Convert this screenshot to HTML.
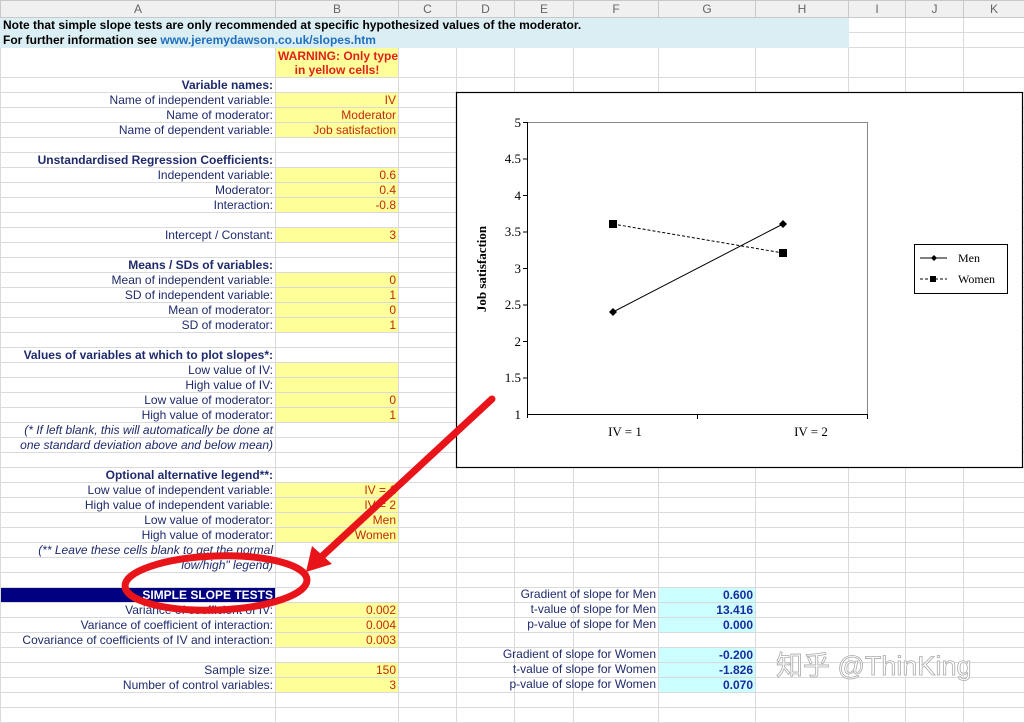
<!DOCTYPE html>
<html><head><meta charset="utf-8"><style>
*{margin:0;padding:0;box-sizing:border-box}
body{width:1024px;height:713px;overflow:hidden;background:#fff;font-family:"Liberation Sans",Arial,sans-serif;font-size:12px;position:relative}
table{border-collapse:collapse;table-layout:fixed;position:absolute;left:0;top:0;width:1024px}
td{border:1px solid #dadada;height:15px;line-height:13px;white-space:nowrap;overflow:visible;padding:0 2px;color:#1f2a6b;text-align:right}
tr.h td{height:17px;background:#f0f0f0;color:#666;text-align:center;font-size:12px;border-color:#c8c8c8}
.y{background:#ffff99;color:#c02a10}
.b{font-weight:bold}
.i{font-style:italic}
.c{background:#ccffff;color:#1a2aa0;font-weight:bold}
.bn{background:#daeef3;border-color:#daeef3;text-align:left;color:#000;font-weight:bold}
.f{position:relative}
.f span{position:absolute;right:2px;top:0}
</style></head><body>
<table>
<colgroup><col style="width:275px"><col style="width:123px"><col style="width:58px"><col style="width:58px"><col style="width:59px"><col style="width:85px"><col style="width:97px"><col style="width:93px"><col style="width:57px"><col style="width:58px"><col style="width:61px"></colgroup>
<tr class="h"><td>A</td><td>B</td><td>C</td><td>D</td><td>E</td><td>F</td><td>G</td><td>H</td><td>I</td><td>J</td><td>K</td></tr>
<tr><td class="bn" colspan="8">Note that simple slope tests are only recommended at specific hypothesized values of the moderator.</td><td></td><td></td><td></td></tr>
<tr><td class="bn" colspan="8">For further information see <span style="color:#1f6fc0">www.jeremydawson.co.uk/slopes.htm</span></td><td></td><td></td><td></td></tr>
<tr><td style="height:30px"></td><td class="y b" style="text-align:center;color:#e0201a;line-height:14px">WARNING: Only type<br>in yellow cells!</td><td></td><td></td><td></td><td></td><td></td><td></td><td></td><td></td><td></td></tr>
<tr><td class="b">Variable names:</td><td></td><td></td><td></td><td></td><td></td><td></td><td></td><td></td><td></td><td></td></tr>
<tr><td>Name of independent variable:</td><td class="y">IV</td><td></td><td></td><td></td><td></td><td></td><td></td><td></td><td></td><td></td></tr>
<tr><td>Name of moderator:</td><td class="y">Moderator</td><td></td><td></td><td></td><td></td><td></td><td></td><td></td><td></td><td></td></tr>
<tr><td>Name of dependent variable:</td><td class="y">Job satisfaction</td><td></td><td></td><td></td><td></td><td></td><td></td><td></td><td></td><td></td></tr>
<tr><td></td><td></td><td></td><td></td><td></td><td></td><td></td><td></td><td></td><td></td><td></td></tr>
<tr><td class="b">Unstandardised Regression Coefficients:</td><td></td><td></td><td></td><td></td><td></td><td></td><td></td><td></td><td></td><td></td></tr>
<tr><td>Independent variable:</td><td class="y">0.6</td><td></td><td></td><td></td><td></td><td></td><td></td><td></td><td></td><td></td></tr>
<tr><td>Moderator:</td><td class="y">0.4</td><td></td><td></td><td></td><td></td><td></td><td></td><td></td><td></td><td></td></tr>
<tr><td>Interaction:</td><td class="y">-0.8</td><td></td><td></td><td></td><td></td><td></td><td></td><td></td><td></td><td></td></tr>
<tr><td></td><td></td><td></td><td></td><td></td><td></td><td></td><td></td><td></td><td></td><td></td></tr>
<tr><td>Intercept / Constant:</td><td class="y">3</td><td></td><td></td><td></td><td></td><td></td><td></td><td></td><td></td><td></td></tr>
<tr><td></td><td></td><td></td><td></td><td></td><td></td><td></td><td></td><td></td><td></td><td></td></tr>
<tr><td class="b">Means / SDs of variables:</td><td></td><td></td><td></td><td></td><td></td><td></td><td></td><td></td><td></td><td></td></tr>
<tr><td>Mean of independent variable:</td><td class="y">0</td><td></td><td></td><td></td><td></td><td></td><td></td><td></td><td></td><td></td></tr>
<tr><td>SD of independent variable:</td><td class="y">1</td><td></td><td></td><td></td><td></td><td></td><td></td><td></td><td></td><td></td></tr>
<tr><td>Mean of moderator:</td><td class="y">0</td><td></td><td></td><td></td><td></td><td></td><td></td><td></td><td></td><td></td></tr>
<tr><td>SD of moderator:</td><td class="y">1</td><td></td><td></td><td></td><td></td><td></td><td></td><td></td><td></td><td></td></tr>
<tr><td></td><td></td><td></td><td></td><td></td><td></td><td></td><td></td><td></td><td></td><td></td></tr>
<tr><td class="b">Values of variables at which to plot slopes*:</td><td></td><td></td><td></td><td></td><td></td><td></td><td></td><td></td><td></td><td></td></tr>
<tr><td>Low value of IV:</td><td class="y"></td><td></td><td></td><td></td><td></td><td></td><td></td><td></td><td></td><td></td></tr>
<tr><td>High value of IV:</td><td class="y"></td><td></td><td></td><td></td><td></td><td></td><td></td><td></td><td></td><td></td></tr>
<tr><td>Low value of moderator:</td><td class="y">0</td><td></td><td></td><td></td><td></td><td></td><td></td><td></td><td></td><td></td></tr>
<tr><td>High value of moderator:</td><td class="y">1</td><td></td><td></td><td></td><td></td><td></td><td></td><td></td><td></td><td></td></tr>
<tr><td class="i">(* If left blank, this will automatically be done at</td><td></td><td></td><td></td><td></td><td></td><td></td><td></td><td></td><td></td><td></td></tr>
<tr><td class="i">one standard deviation above and below mean)</td><td></td><td></td><td></td><td></td><td></td><td></td><td></td><td></td><td></td><td></td></tr>
<tr><td></td><td></td><td></td><td></td><td></td><td></td><td></td><td></td><td></td><td></td><td></td></tr>
<tr><td class="b">Optional alternative legend**:</td><td></td><td></td><td></td><td></td><td></td><td></td><td></td><td></td><td></td><td></td></tr>
<tr><td>Low value of independent variable:</td><td class="y">IV = 1</td><td></td><td></td><td></td><td></td><td></td><td></td><td></td><td></td><td></td></tr>
<tr><td>High value of independent variable:</td><td class="y">IV = 2</td><td></td><td></td><td></td><td></td><td></td><td></td><td></td><td></td><td></td></tr>
<tr><td>Low value of moderator:</td><td class="y">Men</td><td></td><td></td><td></td><td></td><td></td><td></td><td></td><td></td><td></td></tr>
<tr><td>High value of moderator:</td><td class="y">Women</td><td></td><td></td><td></td><td></td><td></td><td></td><td></td><td></td><td></td></tr>
<tr><td class="i">(** Leave these cells blank to get the normal</td><td></td><td></td><td></td><td></td><td></td><td></td><td></td><td></td><td></td><td></td></tr>
<tr><td class="i">low/high" legend)</td><td></td><td></td><td></td><td></td><td></td><td></td><td></td><td></td><td></td><td></td></tr>
<tr><td></td><td></td><td></td><td></td><td></td><td></td><td></td><td></td><td></td><td></td><td></td></tr>
<tr><td class="b" style="background:#000080;color:#fff">SIMPLE SLOPE TESTS</td><td></td><td></td><td></td><td></td><td class="f"><span>Gradient of slope for Men</span></td><td class="c">0.600</td><td></td><td></td><td></td><td></td></tr>
<tr><td>Variance of coefficient of IV:</td><td class="y">0.002</td><td></td><td></td><td></td><td class="f"><span>t-value of slope for Men</span></td><td class="c">13.416</td><td></td><td></td><td></td><td></td></tr>
<tr><td>Variance of coefficient of interaction:</td><td class="y">0.004</td><td></td><td></td><td></td><td class="f"><span>p-value of slope for Men</span></td><td class="c">0.000</td><td></td><td></td><td></td><td></td></tr>
<tr><td>Covariance of coefficients of IV and interaction:</td><td class="y">0.003</td><td></td><td></td><td></td><td></td><td></td><td></td><td></td><td></td><td></td></tr>
<tr><td></td><td></td><td></td><td></td><td></td><td class="f"><span>Gradient of slope for Women</span></td><td class="c">-0.200</td><td></td><td></td><td></td><td></td></tr>
<tr><td>Sample size:</td><td class="y">150</td><td></td><td></td><td></td><td class="f"><span>t-value of slope for Women</span></td><td class="c">-1.826</td><td></td><td></td><td></td><td></td></tr>
<tr><td>Number of control variables:</td><td class="y">3</td><td></td><td></td><td></td><td class="f"><span>p-value of slope for Women</span></td><td class="c">0.070</td><td></td><td></td><td></td><td></td></tr>
<tr><td></td><td></td><td></td><td></td><td></td><td></td><td></td><td></td><td></td><td></td><td></td></tr>
<tr><td></td><td></td><td></td><td></td><td></td><td></td><td></td><td></td><td></td><td></td><td></td></tr>
</table>

<svg width="1024" height="713" style="position:absolute;left:0;top:0" font-family="Liberation Serif,serif">
<rect x="456.5" y="92.5" width="566" height="375" fill="#fff" stroke="#000" stroke-width="1.2"/>
<rect x="527.5" y="122.5" width="340" height="292" fill="#fff" stroke="#888"/>
<line x1="527.5" y1="122" x2="527.5" y2="418" stroke="#000"/>
<line x1="527" y1="414.5" x2="868" y2="414.5" stroke="#000"/>
<g stroke="#000"><line x1="697.5" y1="414" x2="697.5" y2="419"/><line x1="867.5" y1="414" x2="867.5" y2="419"/></g>
<g font-size="13" text-anchor="end" fill="#000">
<text x="521" y="127">5</text><text x="521" y="163">4.5</text><text x="521" y="200">4</text><text x="521" y="236">3.5</text><text x="521" y="273">3</text><text x="521" y="309">2.5</text><text x="521" y="346">2</text><text x="521" y="382">1.5</text><text x="521" y="419">1</text>
</g>
<g stroke="#000"><line x1="523" y1="122.5" x2="527" y2="122.5"/><line x1="523" y1="159" x2="527" y2="159"/><line x1="523" y1="195.5" x2="527" y2="195.5"/><line x1="523" y1="232" x2="527" y2="232"/><line x1="523" y1="268.5" x2="527" y2="268.5"/><line x1="523" y1="305" x2="527" y2="305"/><line x1="523" y1="341.5" x2="527" y2="341.5"/><line x1="523" y1="378" x2="527" y2="378"/></g>
<text x="625" y="436" font-size="13" text-anchor="middle">IV = 1</text>
<text x="811" y="436" font-size="13" text-anchor="middle">IV = 2</text>
<text transform="translate(486,269) rotate(-90)" font-size="13" font-weight="bold" text-anchor="middle">Job satisfaction</text>
<line x1="613" y1="224" x2="783" y2="253" stroke="#000" stroke-dasharray="3,2"/>
<line x1="613" y1="312" x2="783" y2="224" stroke="#000"/>
<rect x="609" y="220" width="8" height="8"/><rect x="779" y="249" width="8" height="8"/>
<path d="M613 308l4 4-4 4-4-4z"/><path d="M783 220l4 4-4 4-4-4z"/>
<rect x="914.5" y="244.5" width="93" height="49" fill="#fff" stroke="#000"/>
<line x1="920" y1="258" x2="947" y2="258" stroke="#000"/><path d="M934 255l3 3-3 3-3-3z"/>
<line x1="920" y1="279" x2="947" y2="279" stroke="#000" stroke-dasharray="3,2"/><rect x="930" y="276" width="6" height="6"/>
<text x="958" y="262" font-size="12">Men</text><text x="958" y="283" font-size="12">Women</text>
<g stroke="#e8141a" fill="none" stroke-linecap="round">
<line x1="492" y1="399" x2="318" y2="560" stroke-width="7"/>
<ellipse cx="216" cy="583" rx="91" ry="27" stroke-width="7" transform="rotate(-2 216 583)"/>
</g>
<path d="M306 572l6-26 20 18z" fill="#e8141a"/>
<text x="776" y="675" font-family="Liberation Sans,Noto Sans CJK SC,sans-serif" font-size="27" fill="#fff" stroke="#aaa" stroke-width="0.8">知乎 @ThinKing</text>
</svg>
</body></html>
